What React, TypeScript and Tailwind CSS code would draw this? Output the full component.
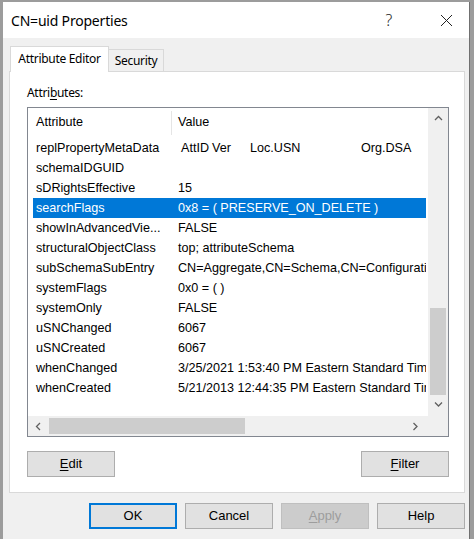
import React from "react";

type Row = { name: string; value: React.ReactNode; selected?: boolean };

const rows: Row[] = [
  {
    name: "replPropertyMetaData",
    value: (
      <span className="flex">
        <span className="w-[34px] pl-[3px]">AttID</span>
        <span className="w-[38px]">Ver</span>
        <span className="w-[111px]">Loc.USN</span>
        <span>Org.DSA</span>
      </span>
    ),
  },
  { name: "schemaIDGUID", value: "" },
  { name: "sDRightsEffective", value: "15" },
  { name: "searchFlags", value: "0x8 = ( PRESERVE_ON_DELETE )", selected: true },
  { name: "showInAdvancedVie...", value: "FALSE" },
  { name: "structuralObjectClass", value: "top; attributeSchema" },
  {
    name: "subSchemaSubEntry",
    value: "CN=Aggregate,CN=Schema,CN=Configuration,DC=corp,DC=contoso,DC=com",
  },
  { name: "systemFlags", value: "0x0 = ( )" },
  { name: "systemOnly", value: "FALSE" },
  { name: "uSNChanged", value: "6067" },
  { name: "uSNCreated", value: "6067" },
  { name: "whenChanged", value: "3/25/2021 1:53:40 PM Eastern Standard Time" },
  { name: "whenCreated", value: "5/21/2013 12:44:35 PM Eastern Standard Time" },
];

// small scrollbar arrow glyph
const Chevron = ({ dir }: { dir: "up" | "down" | "left" | "right" }) => {
  const pts = {
    up: "1,5 4.5,1.5 8,5",
    down: "1,1.5 4.5,5 8,1.5",
    left: "5,1 1.5,4.5 5,8",
    right: "1.5,1 5,4.5 1.5,8",
  }[dir];
  const horiz = dir === "left" || dir === "right";
  return (
    <svg
      width={horiz ? 7 : 9}
      height={horiz ? 9 : 7}
      viewBox={horiz ? "0 0 7 9" : "0 0 9 7"}
    >
      <polyline points={pts} fill="none" stroke="#606060" strokeWidth="1.3" />
    </svg>
  );
};

const Button = ({
  children,
  variant = "normal",
}: {
  children: React.ReactNode;
  variant?: "normal" | "default" | "disabled";
}) => {
  const styles =
    variant === "default"
      ? "bg-[#e1e1e1] border-2 border-[#0078d7] text-black"
      : variant === "disabled"
        ? "bg-[#cccccc] border border-[#bfbfbf] text-[#9d9d9d]"
        : "bg-[#e1e1e1] border border-[#adadad] text-black";
  return (
    <div
      className={`w-[88px] h-[26px] flex items-center justify-center text-[13px] ${styles}`}
    >
      {children}
    </div>
  );
};

export default function App() {
  return (
    <div className="w-[474px] h-[539px] overflow-hidden bg-[#9c9c9c] pl-[3px] pt-[2px] pr-[4px] font-['Liberation_Sans',Arial,sans-serif] text-[13px] text-black">
      <div className="h-[560px] bg-[#f0f0f0] border-r border-[#707070]">
        {/* Title bar */}
        <div className="h-[36px] bg-white flex items-center pl-[8px]">
          <span className="flex-1 font-['Noto_Sans',sans-serif] text-[14px] tracking-[-0.2px] text-black">
            CN=uid Properties
          </span>
          <span className="w-[20px] mr-[24px] text-center font-['Noto_Sans',sans-serif] text-[16px] font-light text-[#222]">
            ?
          </span>
          <span className="w-[46px] flex items-center justify-center">
            <svg width="13" height="13" viewBox="0 0 13 13">
              <path d="M1 1 L12 12 M12 1 L1 12" stroke="#222" strokeWidth="1" />
            </svg>
          </span>
        </div>

        <div className="pl-[6px] pt-[8px]">
          {/* Tabs */}
          <div className="relative z-10 flex items-end h-[26px] pl-px font-['Noto_Sans',sans-serif] text-[12px] tracking-[-0.3px]">
            <div className="h-[26px] w-[99px] bg-white border border-b-0 border-[#d9d9d9] flex items-center justify-center pb-[2px]">
              Attribute Editor
            </div>
            <div className="h-[22px] w-[55px] mb-px border border-l-0 border-b-0 border-[#d9d9d9] flex items-center justify-center">
              Security
            </div>
          </div>

          {/* Tab panel */}
          <div className="-mt-px w-[456px] h-[422px] bg-white border border-[#d9d9d9] pl-[17px] pt-[13px]">
            <div className="h-[16px] leading-[16px] font-['Noto_Sans',sans-serif] text-[12px] tracking-[-0.3px]">
              Attri<u className="underline-offset-2">b</u>utes:
            </div>

            {/* List view */}
            <div className="mt-[6px] w-[422px] h-[330px] border border-[#828790] flex text-[12.6px]">
              <div className="w-[400px] flex flex-col">
                <div className="h-[308px] overflow-hidden bg-white">
                  <div className="h-[29px] flex items-center">
                    <div className="w-[143px] pl-[8px]">Attribute</div>
                    <div className="w-px h-[24px] bg-[#e5e5e5]" />
                    <div className="pl-[6px]">Value</div>
                  </div>
                  <div className="pl-[5px] pt-px">
                    {rows.map((row) => (
                      <div
                        key={row.name}
                        className={`h-[20px] w-[393px] flex items-center overflow-hidden whitespace-nowrap ${
                          row.selected ? "bg-[#0078d7] text-white" : ""
                        }`}
                      >
                        <div className="w-[145px] shrink-0 pl-[3px]">{row.name}</div>
                        <div className="shrink-0">{row.value}</div>
                      </div>
                    ))}
                  </div>
                </div>
                {/* Horizontal scrollbar */}
                <div className="h-[20px] bg-[#f0f0f0] flex items-center">
                  <div className="w-[20px] flex justify-center">
                    <Chevron dir="left" />
                  </div>
                  <div className="ml-px w-[196px] h-[16px] bg-[#cdcdcd]" />
                  <div className="flex-1" />
                  <div className="w-[20px] mr-[3px] flex justify-center">
                    <Chevron dir="right" />
                  </div>
                </div>
              </div>

              {/* Vertical scrollbar */}
              <div className="w-[20px] flex flex-col bg-[#f0f0f0]">
                <div className="h-[308px] flex flex-col">
                  <div className="h-[20px] flex items-center justify-center">
                    <Chevron dir="up" />
                  </div>
                  <div className="flex-1 flex flex-col justify-end items-center pb-px">
                    <div className="w-[16px] h-[87px] bg-[#cdcdcd]" />
                  </div>
                  <div className="h-[20px] flex items-center justify-center pb-[4px]">
                    <Chevron dir="down" />
                  </div>
                </div>
              </div>
            </div>

            <div className="mt-[14px] w-[422px] flex justify-between">
              <Button>
                <u className="underline-offset-2">E</u>dit
              </Button>
              <Button>
                <u className="underline-offset-2">F</u>ilter
              </Button>
            </div>
          </div>

          {/* Dialog buttons */}
          <div className="mt-[10px] w-[456px] flex justify-end gap-[8px]">
            <Button variant="default">OK</Button>
            <Button>Cancel</Button>
            <Button variant="disabled">
              <u className="underline-offset-2">A</u>pply
            </Button>
            <Button>Help</Button>
          </div>
        </div>
      </div>
    </div>
  );
}
